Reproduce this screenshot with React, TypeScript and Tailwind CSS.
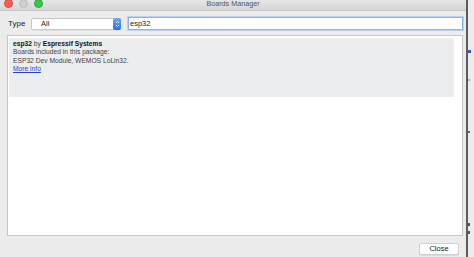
import React from "react";

export default function App() {
  const font = { fontFamily: '"Liberation Sans", Arial, sans-serif' };
  return (
    <div className="flex w-[474px] h-[257px] overflow-hidden bg-[#ececec]" style={font}>
      <div className="flex flex-col w-[466px] h-full bg-[#ececec]">
        {/* Title bar */}
        <div className="relative flex items-center h-[11px] bg-gradient-to-b from-[#e6e6e6] to-[#d6d6d6] border-b border-[#c4c4c4]">
          <div className="flex gap-[3px] pl-[4px] -mt-[4px]">
            <div className="w-[9px] h-[9px] rounded-full bg-[#fc5f57] border border-[#e0443e]" />
            <div className="w-[9px] h-[9px] rounded-full bg-[#cfcfcf] border border-[#bcbcbc] ml-[3px]" />
            <div className="w-[9px] h-[9px] rounded-full bg-[#34c84a] border border-[#2aa83c] ml-[3px]" />
          </div>
          <div className="absolute inset-0 flex items-center justify-center text-[7.2px] text-[#555] -mt-[2px]">
            Boards Manager
          </div>
        </div>
        {/* Toolbar */}
        <div className="flex items-center h-[24px] pl-[8px] pr-[3px] pt-[1px]">
          <span className="text-[8px] text-[#222] w-[23px]">Type</span>
          <div className="flex items-center w-[90px] h-[12px] bg-white border border-[#c8c8c8] rounded-[2px] shadow-[0_0.5px_0_rgba(0,0,0,0.1)]">
            <span className="flex-1 text-[7.5px] text-[#222] pl-[9px]">All</span>
            <div className="flex flex-col items-center justify-center w-[8px] h-[12px] -mr-[1px] bg-gradient-to-b from-[#6fa8f6] to-[#2a6fe6] rounded-[2px]">
              <svg width="5" height="8" viewBox="0 0 5 8">
                <path d="M1 3 L2.5 1.5 L4 3 M1 5 L2.5 6.5 L4 5" stroke="white" strokeWidth="0.8" fill="none" />
              </svg>
            </div>
          </div>
          <div className="ml-[7px] flex-1 flex items-center h-[13px] bg-white border border-[#8fb3e6] shadow-[0_0_0_1px_#b9d2f3] text-[7.5px] text-[#222] pl-[1px]">
            esp32
          </div>
        </div>
        {/* List */}
        <div className="ml-[7px] mr-[3px] h-[201px] bg-white border border-[#c6c6c6] pl-[1px] pr-[8px] pt-[2px]">
          <div className="h-[59px] bg-[#ebedef] pl-[4px] pt-[2px] text-[6.7px] leading-[8.4px] text-[#444]">
            <div>
              <span className="font-bold text-[#111]">esp32</span> by{" "}
              <span className="font-bold text-[#111]">Espressif Systems</span>
            </div>
            <div>Boards included in this package:</div>
            <div>ESP32 Dev Module, WEMOS LoLin32.</div>
            <div className="text-[#2b3fd6] underline">More info</div>
          </div>
        </div>
        {/* Bottom */}
        <div className="flex-1 flex justify-end items-start pt-[7px] pr-[7px]">
          <div className="flex items-center justify-center w-[40px] h-[12px] bg-white border border-[#d0d0d0] rounded-[2px] text-[7.5px] text-[#222] shadow-[0_0.5px_0_rgba(0,0,0,0.15)]">
            Close
          </div>
        </div>
      </div>
      {/* Right edge: background window */}
      <div className="flex-1 h-full border-l-2 border-[#5f5a5e] bg-[#ececec] flex flex-col">
        <div className="h-[50px]" />
        <div className="w-[3px] h-[3px] bg-[#3557c9]" />
        <div className="h-[26px]" />
        <div className="w-[2px] h-[2px] bg-[#aaa]" />
        <div className="h-[50px]" />
        <div className="w-[2px] h-[2px] bg-[#666]" />
        <div className="h-[90px]" />
        <div className="w-[2px] h-[3px] bg-[#555]" />
        <div className="h-[5px]" />
        <div className="w-[2px] h-[3px] bg-[#555]" />
      </div>
    </div>
  );
}
